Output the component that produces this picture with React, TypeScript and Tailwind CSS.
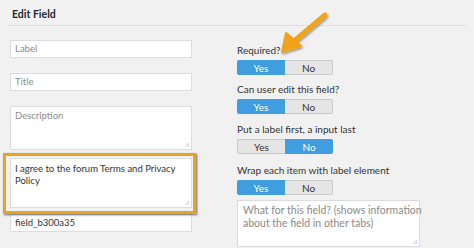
import React from 'react'

const font = { fontFamily: 'Lato, "Open Sans", sans-serif' }

const Toggle: React.FC<{ yes: boolean }> = ({ yes }) => (
  <div className="flex h-[15px] w-[96px] text-[10px] leading-none">
    <div
      className={
        yes
          ? 'flex w-[48px] items-center justify-center rounded-l-[2px] bg-[#3f9de0] text-white'
          : 'flex w-[48px] items-center justify-center rounded-l-[2px] border border-r-0 border-[#c9c9c9] bg-[#e5e5e5] text-[#333]'
      }
    >
      Yes
    </div>
    <div
      className={
        yes
          ? 'flex flex-1 items-center justify-center rounded-r-[2px] border border-l-0 border-[#c9c9c9] bg-[#e5e5e5] text-[#333]'
          : 'flex flex-1 items-center justify-center rounded-r-[2px] bg-[#3f9de0] text-white'
      }
    >
      No
    </div>
  </div>
)

const Grip = () => (
  <span className="absolute bottom-[1px] right-[2px] text-[6px] leading-none text-[#aaa]">.:l</span>
)

export default function App() {
  return (
    <div className="relative h-[248px] w-[474px] overflow-hidden bg-[#f1f1f1] text-[#444]" style={font}>
      <div className="flex h-[26px] items-center border-b border-[#dedede] ml-[8px] mr-[8px] pl-[4px] pt-[4px]">
        <span className="text-[10.5px] font-bold text-[#23282d]">Edit Field</span>
      </div>

      <div className="flex pt-[14px] pl-[10px]">
        {/* left column */}
        <div className="flex w-[182px] flex-col">
          <div className="flex h-[18px] items-center border border-[#dcdcdc] bg-white px-[4px] text-[9.5px] text-[#8a8a8a]">Label</div>
          <div className="mt-[15px] flex h-[18px] items-center border border-[#dcdcdc] bg-white px-[4px] text-[9.5px] text-[#8a8a8a]">Title</div>
          <div className="relative mt-[15px] h-[44px] border border-[#dcdcdc] bg-white px-[4px] pt-[2px] text-[9.5px] text-[#8a8a8a]">
            Description
            <Grip />
          </div>
          <div className="relative mt-[8px]">
            <div className="relative h-[50px] border border-[#dcdcdc] bg-white px-[4px] pt-[4px] text-[9.5px] leading-[12px] text-[#333]">
              I agree to the forum Terms and Privacy Policy
              <Grip />
            </div>
            <div className="absolute -left-[7px] -right-[4px] -top-[5px] -bottom-[6px] border-[3px] border-[#eba21c] shadow-[1px_1px_2px_rgba(0,0,0,0.55)]" />
          </div>
          <div className="mt-[6px] flex h-[18px] items-center border border-[#dcdcdc] bg-white px-[4px] text-[9.5px] text-[#333]">field_b300a35</div>
        </div>

        {/* right column */}
        <div className="ml-[45px] flex flex-col text-[10px] leading-[12px] text-[#333]">
          <div className="mt-[4px] mb-[4px]">Required?</div>
          <Toggle yes />
          <div className="mt-[8px] mb-[4px]">Can user edit this field?</div>
          <Toggle yes />
          <div className="mt-[9px] mb-[4px]">Put a label first, a input last</div>
          <Toggle yes={false} />
          <div className="mt-[10px] mb-[4px]">Wrap each item with label element</div>
          <Toggle yes />
          <div className="relative mt-[5px] h-[47px] w-[183px] whitespace-nowrap border border-[#dcdcdc] bg-white px-[5px] pt-[3px] text-[10.5px] leading-[13px] text-[#8a8a8a]">
            What for this field? (shows information
            <br />
            about the field in other tabs)
            <Grip />
          </div>
        </div>
      </div>

      {/* annotation arrow */}
      <svg className="absolute left-[274px] top-[6px]" width="62" height="54" viewBox="0 0 62 54">
        <defs>
          <filter id="sh" x="-20%" y="-20%" width="150%" height="150%">
            <feDropShadow dx="1" dy="1.5" stdDeviation="1" floodColor="#000" floodOpacity="0.4" />
          </filter>
        </defs>
        <g filter="url(#sh)">
          <line x1="51" y1="9" x2="19" y2="36" stroke="#f2a31a" strokeWidth="5" strokeLinecap="round" />
          <polygon points="8,46 12,27 27,40" fill="#f2a31a" stroke="#f2a31a" strokeWidth="2" strokeLinejoin="round" />
        </g>
      </svg>
    </div>
  )
}
